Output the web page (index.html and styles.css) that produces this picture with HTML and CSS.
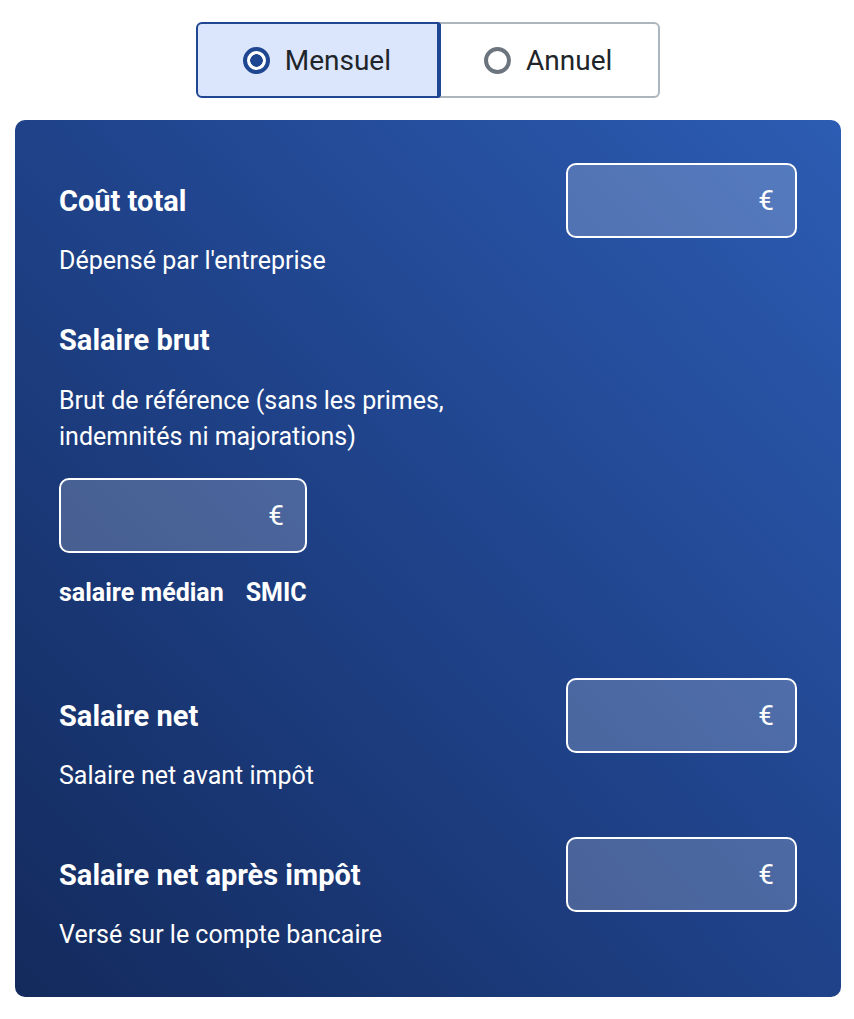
FILE: index.html
```html
<!DOCTYPE html>
<html lang="fr">
  <head>
    <meta charset="utf-8">
    <title>Simulateur de salaire</title>
    <link rel="stylesheet" href="styles.css">
  </head>
  <body>
    <div class="period">
      <label class="period-option selected">
        <span class="radio"></span>
        Mensuel
      </label>
      <label class="period-option">
        <span class="radio"></span>
        Annuel
      </label>
    </div>

    <div class="simulator">
      <div class="field">
        <h3 class="field-title">Coût total</h3>
        <div class="amount">
          <input type="text">
          <span>€</span>
        </div>
        <p class="field-desc">Dépensé par l'entreprise</p>
      </div>

      <div class="field field-brut">
        <h3 class="field-title">Salaire brut</h3>
        <p class="field-desc">
          Brut de référence (sans les primes,<br>indemnités ni majorations)
        </p>
        <div class="amount amount-left">
          <input type="text">
          <span>€</span>
        </div>
        <div class="shortcuts">
          <a href="#">salaire médian</a>
          <a href="#">SMIC</a>
        </div>
      </div>

      <div class="field">
        <h3 class="field-title">Salaire net</h3>
        <div class="amount">
          <input type="text">
          <span>€</span>
        </div>
        <p class="field-desc">Salaire net avant impôt</p>
      </div>

      <div class="field">
        <h3 class="field-title">Salaire net après impôt</h3>
        <div class="amount">
          <input type="text">
          <span>€</span>
        </div>
        <p class="field-desc">Versé sur le compte bancaire</p>
      </div>
    </div>
  </body>
</html>
```

FILE: styles.css
```css
body {
  font-family: Roboto, "Liberation Sans", sans-serif;
  margin: 0;
  padding: 22px 13px 0 15px;
  background: #fff;
}

.period {
  display: flex;
  justify-content: center;
  margin-bottom: 22px;
}

.period-option {
  display: flex;
  align-items: center;
  gap: 15px;
  height: 76px;
  box-sizing: border-box;
  padding: 0 46px 0 45px;
  font-size: 28px;
  color: #212529;
  background: #fff;
  border: 2px solid #adb5bd;
  cursor: pointer;
}

.period-option:first-child {
  border-radius: 6px 0 0 6px;
  border-right: none;
}

.period-option:last-child {
  border-radius: 0 6px 6px 0;
  border-left: 2px solid #1f4690;
  padding-left: 43px;
}

.period-option.selected {
  background: #dbe6fc;
  border-color: #1f4690;
  border-right: 2px solid #1f4690;
}

.radio {
  width: 27px;
  height: 27px;
  box-sizing: border-box;
  border-radius: 50%;
  border: 4px solid #6c757d;
  background: #fff;
}

.selected .radio {
  border-color: #1f4690;
  background: radial-gradient(circle, #1f4690 0 6px, #fff 6.5px);
}

.simulator {
  padding: 43px 44px 44px;
  border-radius: 10px;
  color: #fff;
  background: linear-gradient(to top right, #132a5c 0%, #1f4289 50%, #2c5cb3 100%);
}

.field {
  display: grid;
  grid-template-columns: 1fr 231px;
  margin-bottom: 43px;
}

.field:last-child {
  margin-bottom: 0;
}

.field-title {
  grid-column: 1;
  grid-row: 1;
  display: flex;
  align-items: center;
  min-height: 75px;
  margin: 0;
  font-size: 29px;
  font-weight: 700;
}

.field-desc {
  grid-column: 1 / -1;
  grid-row: 2;
  margin: 5px 0 0;
  font-size: 25px;
  line-height: 36px;
}

.amount {
  grid-column: 2;
  grid-row: 1;
  display: flex;
  align-items: center;
  height: 75px;
  box-sizing: border-box;
  padding: 0 21px 0 16px;
  border: 2px solid #fff;
  border-radius: 10px;
  background: rgba(255, 255, 255, 0.2);
}

.amount input {
  flex: 1;
  min-width: 0;
  border: none;
  background: transparent;
  outline: none;
  color: #fff;
  font: inherit;
  font-size: 24px;
  text-align: right;
}

.amount span {
  font-size: 28px;
  margin-left: 4px;
}

.field-brut .field-title {
  min-height: 0;
  line-height: 36px;
}

.field-brut .field-desc {
  grid-row: 2;
  margin-top: 25px;
}

.amount-left {
  grid-column: 1;
  grid-row: 3;
  width: 248px;
  margin-top: 23px;
}

.shortcuts {
  grid-column: 1 / -1;
  grid-row: 4;
  display: flex;
  gap: 22px;
  margin: 22px 0 24px;
  line-height: 36px;
}

.shortcuts a {
  color: #fff;
  font-size: 25px;
  font-weight: 700;
  text-decoration: none;
}
```
